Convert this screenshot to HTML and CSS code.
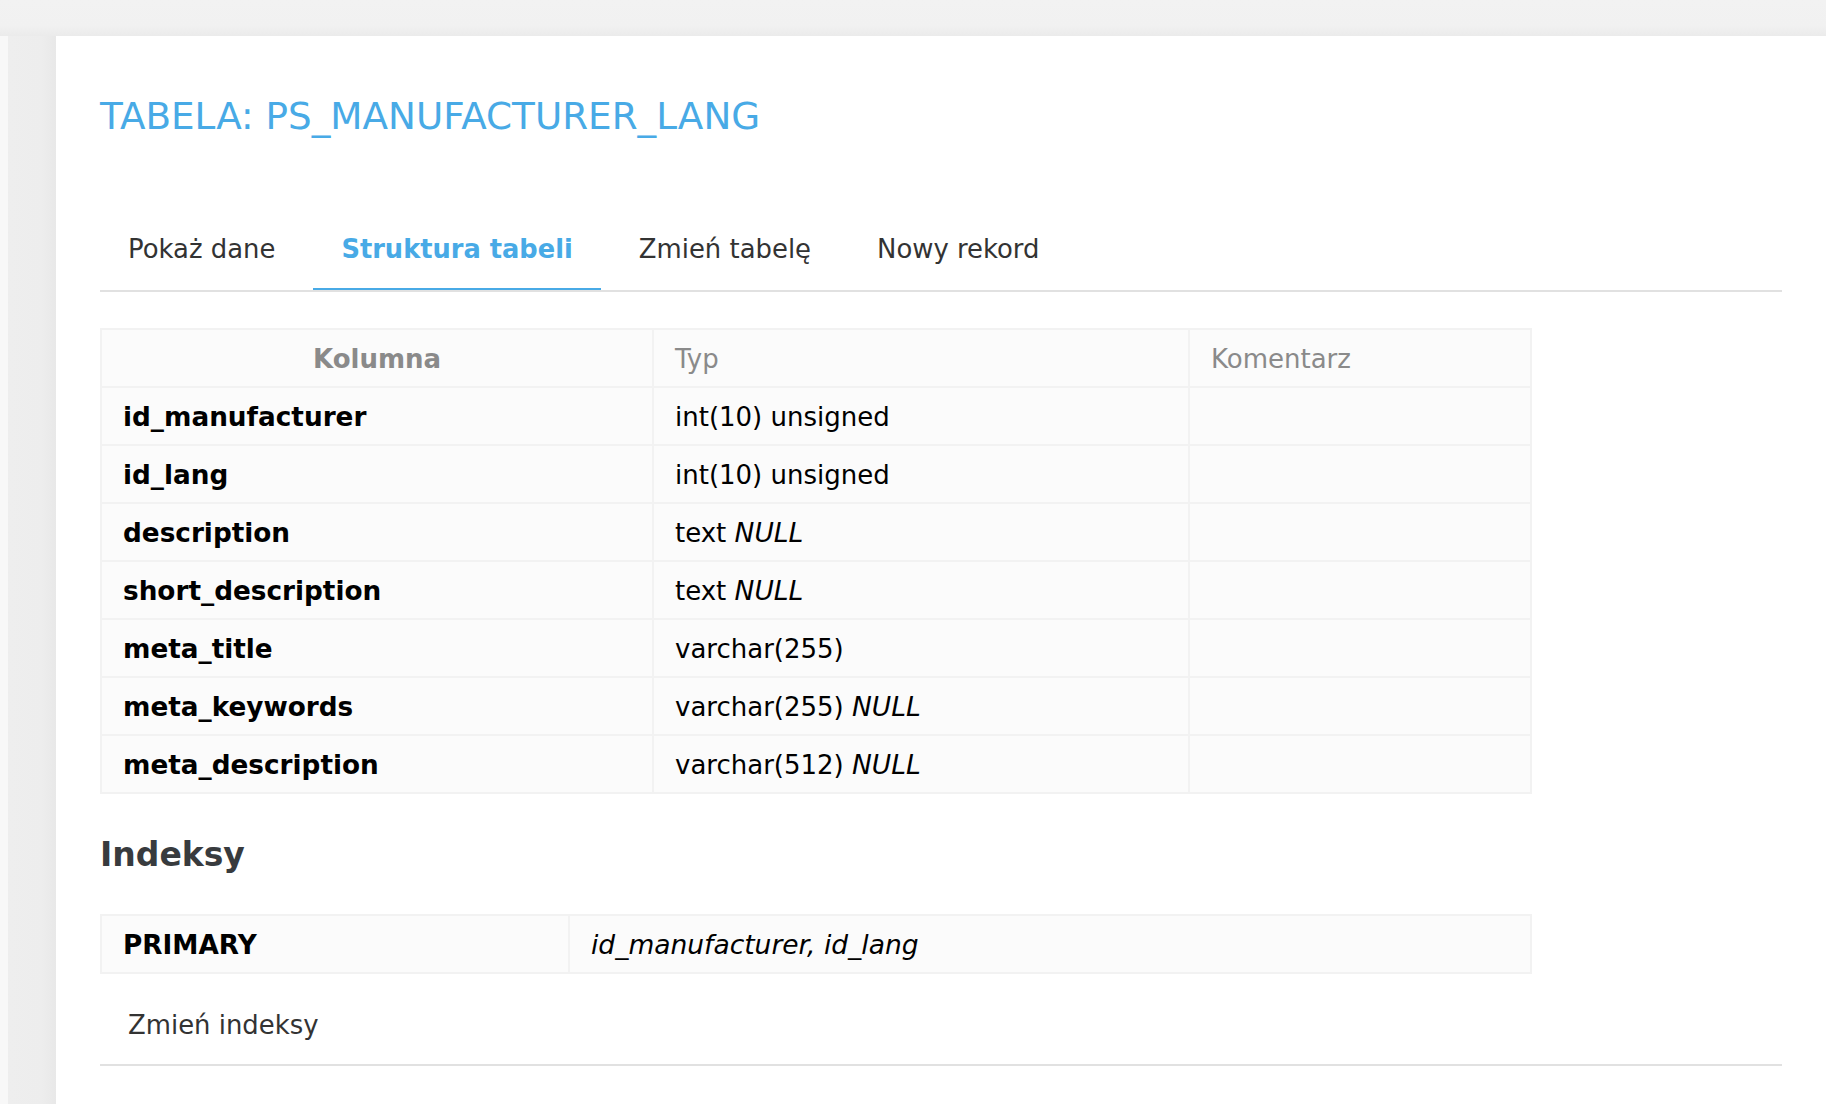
FILE: index.html
```html
<!DOCTYPE html>
<html lang="pl">
<head>
<meta charset="utf-8">
<title>Tabela: ps_manufacturer_lang</title>
<link rel="stylesheet" href="styles.css">
</head>
<body>
<div class="topbar"></div>
<div class="main">
  <div class="rail"></div>
  <div class="gutter"></div>
  <div class="card">
    <h2 class="title">TABELA: PS_MANUFACTURER_LANG</h2>
    <ul class="tabs tabs-top">
      <li class="tab">Pokaż dane</li>
      <li class="tab active">Struktura tabeli</li>
      <li class="tab">Zmień tabelę</li>
      <li class="tab">Nowy rekord</li>
    </ul>
    <table class="grid structure">
      <colgroup><col class="c1"><col class="c2"><col class="c3"></colgroup>
      <thead>
        <tr><th class="head-main">Kolumna</th><td class="head">Typ</td><td class="head">Komentarz</td></tr>
      </thead>
      <tbody>
        <tr><th>id_manufacturer</th><td>int(10) unsigned</td><td></td></tr>
        <tr><th>id_lang</th><td>int(10) unsigned</td><td></td></tr>
        <tr><th>description</th><td>text <i>NULL</i></td><td></td></tr>
        <tr><th>short_description</th><td>text <i>NULL</i></td><td></td></tr>
        <tr><th>meta_title</th><td>varchar(255)</td><td></td></tr>
        <tr><th>meta_keywords</th><td>varchar(255) <i>NULL</i></td><td></td></tr>
        <tr><th>meta_description</th><td>varchar(512) <i>NULL</i></td><td></td></tr>
      </tbody>
    </table>
    <h3 class="section">Indeksy</h3>
    <table class="grid indexes">
      <colgroup><col class="i1"><col class="i2"></colgroup>
      <tbody>
        <tr><th>PRIMARY</th><td><i>id_manufacturer, id_lang</i></td></tr>
      </tbody>
    </table>
    <ul class="tabs tabs-bottom">
      <li class="tab">Zmień indeksy</li>
    </ul>
  </div>
</div>
</body>
</html>
```
FILE: styles.css
```css
html, body {
  margin: 0;
  padding: 0;
}
body {
  background: #f1f1f1;
  font-family: "DejaVu Sans", Verdana, sans-serif;
  color: #000;
  overflow: hidden;
}
.topbar {
  height: 36px;
  background: linear-gradient(to bottom, #f2f2f2 0%, #f1f1f1 70%, #ebebeb 100%);
}
.main {
  display: flex;
  min-height: calc(100vh - 36px);
}
.rail {
  width: 8px;
  background: #f8f8f8;
}
.gutter {
  width: 48px;
  background: linear-gradient(to right, #eeeeee 0%, #ededed 70%, #e8e8e8 100%);
}
.card {
  flex: 1;
  background: #fff;
  padding: 58px 44px 0 44px;
}
.title {
  margin: 0;
  font-size: 37.3px;
  line-height: 44px;
  font-weight: normal;
  color: #48aae6;
}
.tabs {
  list-style: none;
  margin: 0;
  padding: 0;
  display: flex;
  border-bottom: 2px solid #e1e1e1;
}
.tabs-top {
  margin-top: 72px;
}
.tab {
  font-size: 25.9px;
  line-height: 30px;
  padding: 24px 28px;
  margin-right: 10px;
  color: #333;
  border-bottom: 2px solid transparent;
}
.tab.active {
  color: #48aae6;
  font-weight: bold;
  font-size: 25.7px;
  border-bottom-color: #48aae6;
}
.tabs-bottom .tab {
  padding-top: 26px;
  padding-bottom: 22px;
}
.grid {
  border-collapse: collapse;
  table-layout: fixed;
  width: 1430px;
  font-size: 26px;
  line-height: 30px;
}
.grid th, .grid td {
  border: 2px solid #f2f2f2;
  background: #fbfbfb;
  padding: 14px 21px 12px 21px;
  text-align: left;
  vertical-align: top;
  white-space: nowrap;
}
.grid th {
  font-weight: bold;
  font-size: 26.3px;
}
.grid i {
  font-size: 26.5px;
}
.grid .head-main {
  text-align: center;
  color: #8a8a8a;
  font-size: 26px;
}
.grid .head {
  color: #8a8a8a;
}
.structure {
  margin-top: 36px;
}
.c1 { width: 552px; }
.c2 { width: 536px; }
.c3 { width: 342px; }
.i1 { width: 468px; }
.i2 { width: 962px; }
.section {
  margin: 42px 0 0 0;
  font-size: 33px;
  line-height: 38px;
  font-weight: bold;
  color: #383b3e;
}
.indexes {
  margin-top: 40px;
}
.tabs-bottom {
  margin-top: 10px;
}
```
